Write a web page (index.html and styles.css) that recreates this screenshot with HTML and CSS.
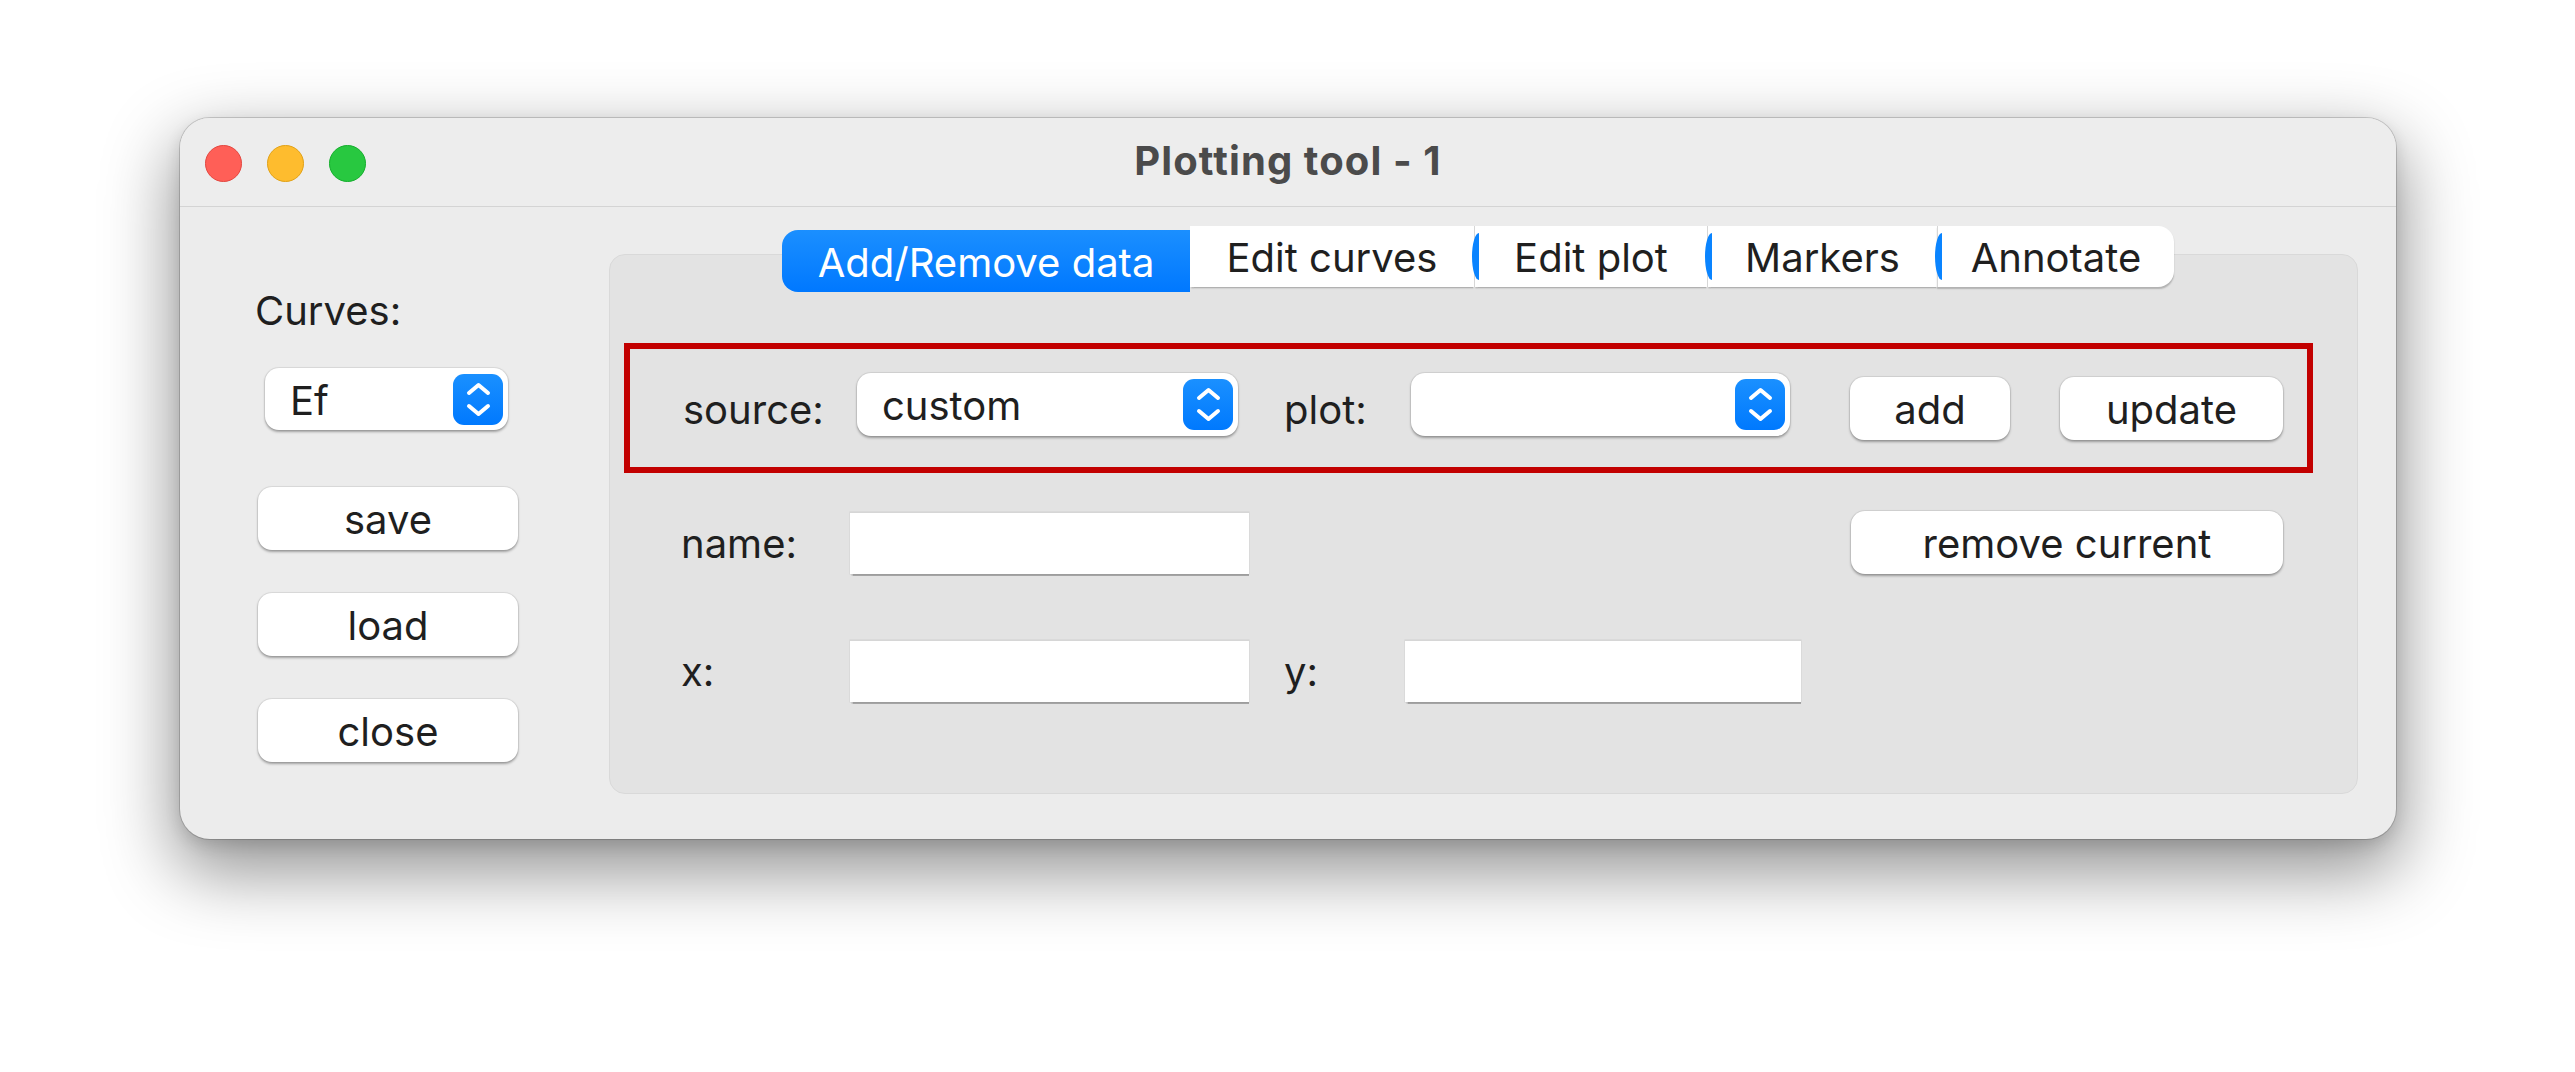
FILE: index.html
```html
<!DOCTYPE html>
<html lang="en">
<head>
<meta charset="utf-8">
<title>Plotting tool - 1</title>
<link rel="stylesheet" href="styles.css">
</head>
<body>
<div class="window">
  <div class="titlebar">
    <div class="lights">
      <span class="light red"></span>
      <span class="light yellow"></span>
      <span class="light green"></span>
    </div>
    <div class="title">Plotting tool - 1</div>
    <div></div>
  </div>
  <div class="content">
    <div class="sidebar">
      <div class="label curves">Curves:</div>
      <div class="select sel-ef">
        <span class="sel-text">Ef</span>
        <span class="stepper"><svg viewBox="0 0 50 51" width="50" height="51"><path d="M16 19 L25.5 11 L35 19 M16 32 L25.5 40 L35 32" fill="none" stroke="#fff" stroke-width="4" stroke-linecap="round" stroke-linejoin="round"/></svg></span>
      </div>
      <div class="btn side first">save</div>
      <div class="btn side">load</div>
      <div class="btn side">close</div>
    </div>
    <div class="notebook">
      <div class="tabs">
        <div class="tab active">Add/Remove data</div>
        <div class="tab t-curves">Edit curves</div>
        <div class="tab sep t-plot">Edit plot</div>
        <div class="tab sep t-markers">Markers</div>
        <div class="tab sep last t-annot">Annotate</div>
      </div>
      <div class="panel">
        <div class="highlight">
          <div class="label l-source">source:</div>
          <div class="select sel-source">
            <span class="sel-text">custom</span>
            <span class="stepper"><svg viewBox="0 0 50 51" width="50" height="51"><path d="M16 19 L25.5 11 L35 19 M16 32 L25.5 40 L35 32" fill="none" stroke="#fff" stroke-width="4" stroke-linecap="round" stroke-linejoin="round"/></svg></span>
          </div>
          <div class="label l-plot">plot:</div>
          <div class="select sel-plot">
            <span class="sel-text"></span>
            <span class="stepper"><svg viewBox="0 0 50 51" width="50" height="51"><path d="M16 19 L25.5 11 L35 19 M16 32 L25.5 40 L35 32" fill="none" stroke="#fff" stroke-width="4" stroke-linecap="round" stroke-linejoin="round"/></svg></span>
          </div>
          <div class="btn b-add">add</div>
          <div class="btn b-update">update</div>
        </div>
        <div class="row row-name">
          <div class="label l-field">name:</div>
          <div class="input i-wide"></div>
          <div class="btn b-remove">remove current</div>
        </div>
        <div class="row row-xy">
          <div class="label l-field">x:</div>
          <div class="input i-wide"></div>
          <div class="label l-y">y:</div>
          <div class="input i-y"></div>
        </div>
      </div>
    </div>
  </div>
</div>
</body>
</html>
```

FILE: styles.css
```css
html, body {
  margin: 0;
  padding: 0;
}

body {
  width: 2575px;
  height: 1072px;
  overflow: hidden;
  background: #ffffff;
  font-family: "Inter", "Liberation Sans", sans-serif;
  font-size: 40px;
  color: #1f1f1f;
}

.window {
  box-sizing: border-box;
  width: 2216px;
  height: 721px;
  margin: 118px 0 0 180px;
  background: #ececec;
  border-radius: 30px;
  overflow: hidden;
  box-shadow: 0 0 0 1px rgba(0, 0, 0, 0.16),
              0 28px 70px 6px rgba(0, 0, 0, 0.42),
              0 6px 16px rgba(0, 0, 0, 0.12);
}

/* ---------- title bar ---------- */
.titlebar {
  box-sizing: border-box;
  height: 89px;
  display: grid;
  grid-template-columns: 1fr auto 1fr;
  align-items: center;
  background: #ededed;
  border-bottom: 1.5px solid #d4d4d4;
}

.lights {
  display: flex;
  gap: 25px;
  padding-left: 25px;
  padding-top: 2px;
}

.light {
  display: block;
  width: 37px;
  height: 37px;
  border-radius: 50%;
  box-sizing: border-box;
}

.light.red { background: #ff5f57; border: 1px solid #e2463f; }
.light.yellow { background: #febc2e; border: 1px solid #e1a116; }
.light.green { background: #28c840; border: 1px solid #14ae2c; }

.title {
  font-weight: 700;
  font-size: 40px;
  letter-spacing: 1.1px;
  color: #4b4b4b;
  line-height: 48px;
  padding-bottom: 2px;
}

/* ---------- content ---------- */
.content {
  display: flex;
  align-items: flex-start;
}

.sidebar {
  box-sizing: border-box;
  width: 429px;
  padding: 77px 0 0 75px;
  display: flex;
  flex-direction: column;
  align-items: flex-start;
}

.label {
  box-sizing: border-box;
  line-height: 48px;
  padding-top: 3px;
  white-space: nowrap;
}

/* ---------- popup selects ---------- */
.select {
  box-sizing: border-box;
  display: flex;
  align-items: center;
  background: #ffffff;
  border-radius: 14px;
  padding-left: 25px;
  box-shadow: 0 0 0 1px rgba(0, 0, 0, 0.05),
              0 1.5px 2.5px rgba(0, 0, 0, 0.32);
}

.sel-text {
  line-height: 48px;
  padding-top: 3px;
  flex: 1;
}

.stepper {
  display: block;
  width: 50px;
  height: 51px;
  margin-right: 5px;
  border-radius: 11px;
  background: linear-gradient(#1a90ff, #0079fe);
}

.stepper svg {
  display: block;
}

.sel-ef {
  width: 243px;
  height: 62px;
  margin: 33px 0 0 10px;
}

/* ---------- push buttons ---------- */
.btn {
  box-sizing: border-box;
  display: flex;
  align-items: center;
  justify-content: center;
  height: 63px;
  padding-top: 3px;
  background: #ffffff;
  border-radius: 14px;
  line-height: 48px;
  white-space: nowrap;
  box-shadow: 0 0 0 1px rgba(0, 0, 0, 0.05),
              0 1.5px 2.5px rgba(0, 0, 0, 0.32);
}

.btn.side {
  width: 260px;
  margin: 43px 0 0 3px;
}

.btn.side.first {
  margin-top: 57px;
}

/* ---------- notebook ---------- */
.notebook {
  width: 1749px;
  margin-top: 19px;
}

.tabs {
  position: relative;
  z-index: 1;
  display: flex;
  justify-content: center;
  align-items: flex-start;
  height: 66px;
  padding-right: 11px;
}

.tab {
  position: relative;
  box-sizing: border-box;
  height: 61px;
  padding-top: 3px;
  display: flex;
  align-items: center;
  justify-content: center;
  background: #ffffff;
  line-height: 48px;
  white-space: nowrap;
  box-shadow: 0 2px 1.5px -0.5px rgba(0, 0, 0, 0.22);
}

.tab.active {
  width: 408px;
  height: 62px;
  margin-top: 4px;
  color: #ffffff;
  background: linear-gradient(#1b8fff, #0078ff);
  border-radius: 16px 0 0 16px;
  box-shadow: none;
}

.t-curves { width: 284px; }
.t-plot { width: 233px; }
.t-markers { width: 230px; }
.t-annot { width: 237px; }

.tab.sep {
  border-left: 1.5px solid #d6d6d6;
}

.tab.sep::before {
  content: "";
  position: absolute;
  left: -3px;
  top: 7px;
  width: 7px;
  height: 47px;
  background: #0a84ff;
  border-radius: 100% 0 0 100% / 50% 0 0 50%;
}

.tab.last {
  border-radius: 0 16px 16px 0;
}

.panel {
  box-sizing: border-box;
  margin-top: -38px;
  background: #e3e3e3;
  border: 1.5px solid #d9d9d9;
  border-radius: 16px;
  padding: 88px 44px 91px 14px;
}

/* red highlight row */
.highlight {
  box-sizing: border-box;
  height: 130px;
  border: 6.5px solid #c20000;
  display: flex;
  align-items: center;
  padding-left: 53px;
}

.l-source { width: 174px; }

.sel-source {
  width: 381px;
  height: 63px;
  margin-bottom: 8px;
}

.l-plot {
  width: 127px;
  margin-left: 46px;
}

.sel-plot {
  width: 379px;
  height: 63px;
  margin-bottom: 8px;
}

.b-add {
  width: 160px;
  margin-left: 60px;
}

.b-update {
  width: 223px;
  margin-left: 50px;
}

/* regular rows */
.row {
  display: flex;
  align-items: center;
  height: 63px;
  padding-left: 57px;
}

.row-name { margin-top: 38px; }
.row-xy { margin-top: 65px; }

.l-field { width: 169px; }

.input {
  box-sizing: border-box;
  height: 62px;
  background: #ffffff;
  border-top: 1px solid #d6d6d6;
  box-shadow: 0 2px 1px -0.5px rgba(0, 0, 0, 0.28),
              0 0 0 0.5px rgba(0, 0, 0, 0.08);
}

.i-wide { width: 399px; }

.b-remove {
  width: 432px;
  margin-left: 602px;
}

.l-y {
  width: 121px;
  margin-left: 35px;
}

.i-y { width: 396px; }
```
